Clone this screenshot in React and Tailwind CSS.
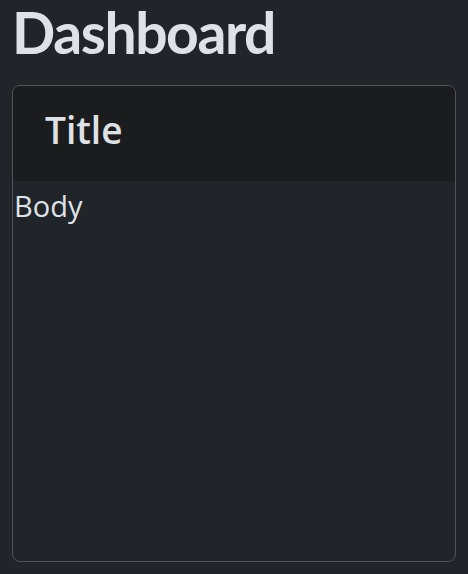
export default function App() {
  return (
    <div
      className="h-[574px] bg-[#212529] px-3 pb-3 text-[#dee2e6] flex flex-col"
      style={{ fontFamily: '"Open Sans", "Noto Sans", sans-serif' }}
    >
      <h1
        className="text-[57px] font-bold leading-[64px] tracking-[-1.4px] mb-[21px]"
        style={{ fontFamily: 'Lato, "Open Sans", sans-serif' }}
      >
        Dashboard
      </h1>
      <div className="flex-1 flex flex-col border-[1.5px] border-[#4f5257] rounded-lg overflow-hidden">
        <div className="h-[95px] bg-[#1b1c1e] px-8 flex items-center">
          <h2 className="text-[37px] font-semibold leading-none mt-[-9px]">Title</h2>
        </div>
        <div className="text-[29px] leading-[50px] px-[1px]">Body</div>
      </div>
    </div>
  );
}
